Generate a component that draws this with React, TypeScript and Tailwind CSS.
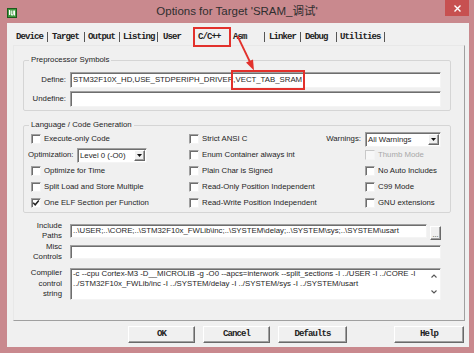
import React from "react";

const sunken =
  "border border-t-[#a0a0a0] border-l-[#a0a0a0] border-r-[#f4f4f4] border-b-[#f4f4f4] shadow-[inset_1px_1px_0_#6e6e6e] bg-white";
const raised =
  "border border-t-white border-l-white border-r-[#696969] border-b-[#696969] shadow-[inset_-1px_-1px_0_#a0a0a0] bg-[#f0f0f0]";
const mono = "font-['Liberation_Mono',monospace] font-bold text-[9px] tracking-[-0.9px] text-[#222]";

function Check({ label, checked, disabled }: { label: string; checked?: boolean; disabled?: boolean }) {
  return (
    <div className="flex items-center h-[16px] whitespace-nowrap">
      <span
        className={
          "w-[10px] h-[10px] flex items-center justify-center border " +
          (disabled
            ? "border-t-[#c8c8c8] border-l-[#c8c8c8] border-r-[#f4f4f4] border-b-[#f4f4f4] bg-[#f7f7f7]"
            : "border-t-[#a0a0a0] border-l-[#a0a0a0] border-r-[#f4f4f4] border-b-[#f4f4f4] shadow-[inset_1px_1px_0_#6e6e6e] bg-white")
        }
      >
        {checked && (
          <svg width="8" height="8" viewBox="0 0 8 8">
            <path d="M1.2 3.8 L3.2 5.8 L6.8 1.6" stroke="#222" strokeWidth="1.5" fill="none" />
          </svg>
        )}
      </span>
      <span className={"ml-[3px] " + (disabled ? "text-[#a8a8a8]" : "")}>{label}</span>
    </div>
  );
}

function Select({ value, w }: { value: string; w: string }) {
  return (
    <div className={"flex items-center h-[15px] " + sunken + " " + w}>
      <span className="flex-1 pl-[2px] leading-[13px] whitespace-nowrap overflow-hidden">{value}</span>
      <span className={"w-[11px] h-[11px] mr-[1px] flex items-center justify-center " + raised}>
        <svg width="5" height="3" viewBox="0 0 5 3">
          <path d="M0 0 H5 L2.5 3 Z" fill="#111" />
        </svg>
      </span>
    </div>
  );
}

const tabs: { label: string; w: string; pl: string; sep: boolean; sel?: boolean }[] = [
  { label: "Device", w: "w-[36px]", pl: "pl-[4px]", sep: true },
  { label: "Target", w: "w-[37px]", pl: "pl-[4px]", sep: true },
  { label: "Output", w: "w-[35px]", pl: "pl-[3px]", sep: true },
  { label: "Listing", w: "w-[38px]", pl: "pl-[3px]", sep: true },
  { label: "User", w: "w-[35px]", pl: "pl-[5px]", sep: false },
  { label: "C/C++", w: "w-[38px]", pl: "pl-[5px]", sep: false, sel: true },
  { label: "Asm", w: "w-[34px]", pl: "pl-[2px]", sep: true },
  { label: "Linker", w: "w-[36px]", pl: "pl-[4px]", sep: true },
  { label: "Debug", w: "w-[36px]", pl: "pl-[4px]", sep: true },
  { label: "Utilities", w: "w-[48px]", pl: "pl-[3px]", sep: true },
];

export default function App() {
  return (
    <div className="relative w-[474px] h-[353px] bg-[#c9898e] flex flex-col overflow-hidden font-['Liberation_Sans',Arial,sans-serif] text-[7.8px] text-[#1e1e1e]">
      {/* Title bar */}
      <div className="h-[23px] flex items-start shrink-0">
        <svg className="ml-[7px] mt-[8px]" width="10" height="10" viewBox="0 0 10 10">
          <rect x="0.5" y="0.5" width="9" height="9" fill="#3f9a3f" stroke="#1d5a1d" />
          <path d="M2.5 2 V7 M4.2 2.5 V6 Q4.2 7 5.2 7 Q6.2 7 6.2 6 V2.5 M7.5 2.5 V7.5" stroke="#ffffff" strokeWidth="1.1" fill="none" />
        </svg>
        <div className="flex-1 text-center pl-[12px] pt-[4px] text-[11.5px] leading-[15px] text-[#2e2e2e] font-['Liberation_Sans','Noto_Sans_CJK_SC',sans-serif] whitespace-nowrap">
          Options for Target 'SRAM_调试'
        </div>
        <div className="w-[24px] h-[16px] mr-[5px] bg-[#c75050] flex items-center justify-center">
          <svg width="7" height="7" viewBox="0 0 7 7">
            <path d="M0.5 0.5 L6.5 6.5 M6.5 0.5 L0.5 6.5" stroke="#fff" strokeWidth="1.4" />
          </svg>
        </div>
      </div>

      {/* Client */}
      <div className="ml-[7px] mr-[5px] h-[324px] bg-[#f0f0f0] flex flex-col shrink-0">
        {/* Tabs */}
        <div className="flex pl-[5px] pt-[9px] h-[22px] shrink-0">
          {tabs.map((t) => (
            <div
              key={t.label}
              className={
                "relative h-[10px] leading-[10px] " +
                t.w +
                " " +
                t.pl +
                " " +
                mono +
                (t.sep ? " border-r border-r-[#555]" : "")
              }
            >
              {t.label}
              {t.sel && (
                <span className="absolute left-0 right-0 -top-[5px] -bottom-[5px] border-2 border-[#e2312c]" />
              )}
            </div>
          ))}
        </div>

        {/* Panel */}
        <div className="ml-[6px] w-[452px] h-[276px] shrink-0 border border-t-[#e8e8e8] border-l-[#e8e8e8] border-r-[#a0a0a0] border-b-[#a0a0a0] flex flex-col">
          {/* Preprocessor Symbols */}
          <fieldset className="mt-[9px] ml-[9px] w-[428px] border border-[#d5d5d5] rounded-[2px] px-0 pb-[3px]">
            <legend className="ml-[5px] px-[2px] leading-[10px]">Preprocessor Symbols</legend>
            <div className="flex items-center mt-[7px] h-[16px]">
              <span className="w-[42px] text-right">Define:</span>
              <div className={"ml-[4px] w-[371px] h-[16px] flex items-center pl-[2px] whitespace-nowrap " + sunken}>
                <span>STM32F10X_HD,USE_STDPERIPH_DRIVER</span>
                <span className="relative">
                  ,VECT_TAB_SRAM
                  <span className="absolute -left-[2px] -right-[3px] -top-[4px] -bottom-[4px] border-2 border-[#e2312c]" />
                </span>
              </div>
            </div>
            <div className="flex items-center mt-[3px] h-[16px]">
              <span className="w-[42px] text-right">Undefine:</span>
              <div className={"ml-[4px] w-[371px] h-[16px] " + sunken} />
            </div>
          </fieldset>

          {/* Language / Code Generation */}
          <fieldset className="mt-[9px] ml-[9px] w-[428px] border border-[#d5d5d5] rounded-[2px] pb-[1px] pl-[4px]">
            <legend className="ml-[1px] px-[2px] leading-[10px]">Language / Code Generation</legend>
            <div className="grid grid-cols-[161px_136px_116px] mt-[1px]">
              <div className="ml-[3px]"><Check label="Execute-only Code" /></div>
              <Check label="Strict ANSI C" />
              <div className="flex items-center h-[16px]">
                <span className="w-[36px] text-right">Warnings:</span>
                <div className="ml-[4px]"><Select value="All Warnings" w="w-[76px]" /></div>
              </div>

              <div className="flex items-center h-[16px]">
                <span className="w-[49px]">Optimization:</span>
                <Select value="Level 0 (-O0)" w="w-[70px]" />
              </div>
              <Check label="Enum Container always int" />
              <div className="ml-[40px]"><Check label="Thumb Mode" disabled /></div>

              <div className="ml-[3px]"><Check label="Optimize for Time" /></div>
              <Check label="Plain Char is Signed" />
              <div className="ml-[40px]"><Check label="No Auto Includes" /></div>

              <div className="ml-[3px]"><Check label="Split Load and Store Multiple" /></div>
              <Check label="Read-Only Position Independent" />
              <div className="ml-[40px]"><Check label="C99 Mode" /></div>

              <div className="ml-[3px]"><Check label="One ELF Section per Function" checked /></div>
              <Check label="Read-Write Position Independent" />
              <div className="ml-[40px]"><Check label="GNU extensions" /></div>
            </div>
          </fieldset>

          {/* Include / Misc / Compiler */}
          <div className="mt-[8px] flex flex-col">
            <div className="flex items-start">
              <div className="w-[48px] text-right leading-[10px]">
                <div>Include</div>
                <div>Paths</div>
              </div>
              <div className={"ml-[8px] mt-[3px] w-[357px] h-[14px] flex items-center pl-[2px] whitespace-nowrap overflow-hidden " + sunken}>
                {"..\\USER;..\\CORE;..\\STM32F10x_FWLib\\inc;..\\SYSTEM\\delay;..\\SYSTEM\\sys;..\\SYSTEM\\usart"}
              </div>
              <div className={"ml-[3px] mt-[5px] w-[11px] h-[14px] flex items-end justify-center leading-[8px] text-[7px] " + raised}>
                ...
              </div>
            </div>
            <div className="flex items-start mt-[1px]">
              <div className="w-[48px] text-right leading-[10px]">
                <div>Misc</div>
                <div>Controls</div>
              </div>
              <div className={"ml-[8px] mt-[3px] w-[371px] h-[14px] " + sunken} />
            </div>
            <div className="flex items-start mt-[6px]">
              <div className="w-[48px] text-right leading-[10.5px]">
                <div>Compiler</div>
                <div>control</div>
                <div>string</div>
              </div>
              <div className={"ml-[8px] w-[371px] h-[32px] flex " + sunken}>
                <div className="flex-1 pl-[2px] pt-[0px] leading-[10px] whitespace-nowrap overflow-hidden">
                  <div>-c --cpu Cortex-M3 -D__MICROLIB -g -O0 --apcs=interwork --split_sections -I ../USER -I ../CORE -I</div>
                  <div>../STM32F10x_FWLib/inc -I ../SYSTEM/delay -I ../SYSTEM/sys -I ../SYSTEM/usart</div>
                </div>
                <div className="w-[12px] flex flex-col items-center justify-between py-[5px]">
                  <svg width="6" height="4" viewBox="0 0 6 4">
                    <path d="M0.5 3.5 L3 1 L5.5 3.5" stroke="#555" strokeWidth="1.1" fill="none" />
                  </svg>
                  <svg width="6" height="4" viewBox="0 0 6 4">
                    <path d="M0.5 0.5 L3 3 L5.5 0.5" stroke="#555" strokeWidth="1.1" fill="none" />
                  </svg>
                </div>
              </div>
            </div>
          </div>
        </div>

        {/* Buttons */}
        <div className="flex pt-[5px] pl-[121px]">
          <div className={"w-[67px] h-[17px] flex items-center justify-center " + raised + " " + mono}>OK</div>
          <div className={"ml-[8px] w-[67px] h-[17px] flex items-center justify-center " + raised + " " + mono}>Cancel</div>
          <div className={"ml-[8px] w-[69px] h-[17px] flex items-center justify-center " + raised + " " + mono}>Defaults</div>
          <div className={"ml-[47px] w-[70px] h-[17px] flex items-center justify-center " + raised + " " + mono}>Help</div>
        </div>
      </div>

      {/* Red annotation arrow */}
      <svg className="absolute left-0 top-0 pointer-events-none" width="474" height="353" viewBox="0 0 474 353">
        <path d="M237.5 36 L250 62" stroke="#e2312c" strokeWidth="1.8" fill="none" />
        <path d="M254 70.5 L246 62.5 L253 59.5 Z" fill="#e2312c" />
      </svg>
    </div>
  );
}
